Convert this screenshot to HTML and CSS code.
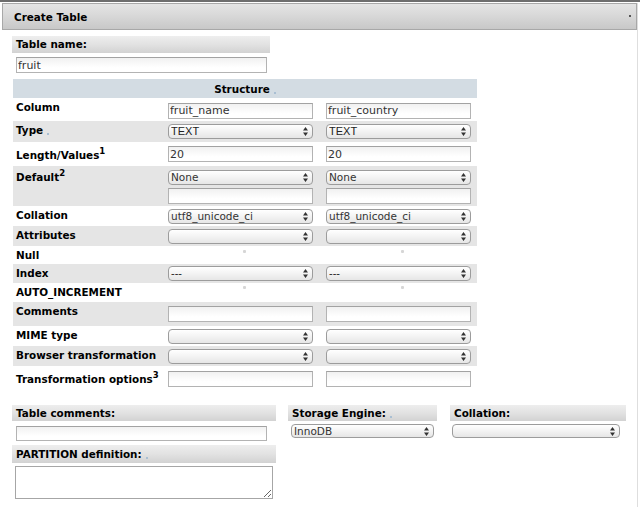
FILE: index.html
```html
<!DOCTYPE html>
<html>
<head>
<meta charset="utf-8">
<title>Create Table</title>
<link rel="stylesheet" href="styles.css">
</head>
<body>
<div class="topline"></div>
<div class="page">
  <div class="titlebar">Create Table<span class="corner-dot"></span></div>
  <div class="content">
    <div class="legend legend-name">Table name:</div>
    <input class="txt txt-name" type="text" value="fruit">

    <table class="structure">
      <colgroup><col class="c-label"><col class="c-one"><col class="c-two"></colgroup>
      <tr class="r-head"><th colspan="3">Structure<span class="help"></span></th></tr>
      <tr class="r-column">
        <td class="lbl">Column</td>
        <td><input class="txt txt-col" type="text" value="fruit_name"></td>
        <td><input class="txt txt-col" type="text" value="fruit_country"></td>
      </tr>
      <tr class="r-type odd">
        <td class="lbl">Type<span class="help"></span></td>
        <td><span class="sel"><select class="s-col"><option>TEXT</option></select><svg class="arr" viewBox="0 0 5 9"><path d="M2.5 0L5 3.6H0Z M2.5 9L0 5.4H5Z"/></svg></span></td>
        <td><span class="sel"><select class="s-col"><option>TEXT</option></select><svg class="arr" viewBox="0 0 5 9"><path d="M2.5 0L5 3.6H0Z M2.5 9L0 5.4H5Z"/></svg></span></td>
      </tr>
      <tr class="r-length">
        <td class="lbl lbl-sup">Length/Values<sup>1</sup></td>
        <td><input class="txt txt-col" type="text" value="20"></td>
        <td><input class="txt txt-col" type="text" value="20"></td>
      </tr>
      <tr class="r-default odd">
        <td class="lbl lbl-default">Default<sup>2</sup></td>
        <td class="stack"><span class="sel"><select class="s-col s-lucida"><option>None</option></select><svg class="arr" viewBox="0 0 5 9"><path d="M2.5 0L5 3.6H0Z M2.5 9L0 5.4H5Z"/></svg></span><input class="txt txt-col txt-under" type="text" value=""></td>
        <td class="stack"><span class="sel"><select class="s-col s-lucida"><option>None</option></select><svg class="arr" viewBox="0 0 5 9"><path d="M2.5 0L5 3.6H0Z M2.5 9L0 5.4H5Z"/></svg></span><input class="txt txt-col txt-under" type="text" value=""></td>
      </tr>
      <tr class="r-collation">
        <td class="lbl">Collation</td>
        <td><span class="sel"><select class="s-col s-lucida"><option>utf8_unicode_ci</option></select><svg class="arr" viewBox="0 0 5 9"><path d="M2.5 0L5 3.6H0Z M2.5 9L0 5.4H5Z"/></svg></span></td>
        <td><span class="sel"><select class="s-col s-lucida"><option>utf8_unicode_ci</option></select><svg class="arr" viewBox="0 0 5 9"><path d="M2.5 0L5 3.6H0Z M2.5 9L0 5.4H5Z"/></svg></span></td>
      </tr>
      <tr class="r-attr odd">
        <td class="lbl">Attributes</td>
        <td><span class="sel"><select class="s-col"><option></option></select><svg class="arr" viewBox="0 0 5 9"><path d="M2.5 0L5 3.6H0Z M2.5 9L0 5.4H5Z"/></svg></span></td>
        <td><span class="sel"><select class="s-col"><option></option></select><svg class="arr" viewBox="0 0 5 9"><path d="M2.5 0L5 3.6H0Z M2.5 9L0 5.4H5Z"/></svg></span></td>
      </tr>
      <tr class="r-null">
        <td class="lbl">Null</td>
        <td class="dotcell"><span class="chk"></span></td>
        <td class="dotcell"><span class="chk"></span></td>
      </tr>
      <tr class="r-index odd">
        <td class="lbl">Index</td>
        <td><span class="sel"><select class="s-col"><option>---</option></select><svg class="arr" viewBox="0 0 5 9"><path d="M2.5 0L5 3.6H0Z M2.5 9L0 5.4H5Z"/></svg></span></td>
        <td><span class="sel"><select class="s-col"><option>---</option></select><svg class="arr" viewBox="0 0 5 9"><path d="M2.5 0L5 3.6H0Z M2.5 9L0 5.4H5Z"/></svg></span></td>
      </tr>
      <tr class="r-auto">
        <td class="lbl">AUTO_INCREMENT</td>
        <td class="dotcell"><span class="chk"></span></td>
        <td class="dotcell"><span class="chk"></span></td>
      </tr>
      <tr class="r-comments odd">
        <td class="lbl">Comments</td>
        <td><input class="txt txt-col" type="text" value=""></td>
        <td><input class="txt txt-col" type="text" value=""></td>
      </tr>
      <tr class="r-mime">
        <td class="lbl">MIME type</td>
        <td><span class="sel"><select class="s-col"><option></option></select><svg class="arr" viewBox="0 0 5 9"><path d="M2.5 0L5 3.6H0Z M2.5 9L0 5.4H5Z"/></svg></span></td>
        <td><span class="sel"><select class="s-col"><option></option></select><svg class="arr" viewBox="0 0 5 9"><path d="M2.5 0L5 3.6H0Z M2.5 9L0 5.4H5Z"/></svg></span></td>
      </tr>
      <tr class="r-browser odd">
        <td class="lbl">Browser transformation</td>
        <td><span class="sel"><select class="s-col"><option></option></select><svg class="arr" viewBox="0 0 5 9"><path d="M2.5 0L5 3.6H0Z M2.5 9L0 5.4H5Z"/></svg></span></td>
        <td><span class="sel"><select class="s-col"><option></option></select><svg class="arr" viewBox="0 0 5 9"><path d="M2.5 0L5 3.6H0Z M2.5 9L0 5.4H5Z"/></svg></span></td>
      </tr>
      <tr class="r-transform">
        <td class="lbl lbl-sup">Transformation options<sup>3</sup></td>
        <td><input class="txt txt-col" type="text" value=""></td>
        <td><input class="txt txt-col" type="text" value=""></td>
      </tr>
    </table>

    <div class="bottom">
      <div class="bcol bcol-left">
        <div class="legend">Table comments:</div>
        <input class="txt txt-comment" type="text" value="">
        <div class="legend legend-part">PARTITION definition:<span class="help"></span></div>
        <textarea class="part"></textarea>
      </div>
      <div class="bcol bcol-mid">
        <div class="legend">Storage Engine:<span class="help"></span></div>
        <span class="sel sel-engine"><select class="s-engine s-lucida"><option>InnoDB</option></select><svg class="arr" viewBox="0 0 5 9"><path d="M2.5 0L5 3.6H0Z M2.5 9L0 5.4H5Z"/></svg></span>
      </div>
      <div class="bcol bcol-right">
        <div class="legend">Collation:</div>
        <span class="sel sel-coll"><select class="s-coll"><option></option></select><svg class="arr" viewBox="0 0 5 9"><path d="M2.5 0L5 3.6H0Z M2.5 9L0 5.4H5Z"/></svg></span>
      </div>
    </div>
  </div>
</div>
</body>
</html>
```
FILE: styles.css
```css
html, body {
  margin: 0;
  padding: 0;
  background: #ffffff;
}
body {
  width: 640px;
  height: 507px;
  overflow: hidden;
  font-family: "DejaVu Sans", Verdana, sans-serif;
  font-size: 10.4px;
  color: #000;
}
.topline {
  height: 2px;
  background: #6e6e6e;
  margin-bottom: 1px;
}
.page {
  width: 638px;
  height: 504px;
  box-sizing: border-box;
  border-right: 1px solid #dedede;
}
.titlebar {
  position: relative;
  margin-left: 2px;
  height: 25px;
  border: 1px solid #a8a8a8;
  background: linear-gradient(#e4e4e4, #dadada 40%, #c8c8c8);
  font-weight: bold;
  line-height: 27px;
  padding-left: 11px;
  box-sizing: content-box;
}
.corner-dot {
  position: absolute;
  right: 5px;
  top: 11px;
  width: 2px;
  height: 2px;
  background: #555;
}
.content {
  padding-left: 12px;
}
.legend {
  height: 16px;
  line-height: 16px;
  font-weight: bold;
  padding-left: 4px;
  background: linear-gradient(#eeeeee, #e2e2e2 50%, #d2d2d2);
}
.legend-name {
  margin-top: 6px;
  width: 254px;
  height: 17px;
  line-height: 17px;
}
.help {
  display: inline-block;
  width: 2px;
  height: 2px;
  background: #a9bfd3;
  margin-left: 4px;
  vertical-align: -1px;
}
.txt {
  display: block;
  box-sizing: border-box;
  height: 16px;
  border: 1px solid #b3b3b3;
  border-top-color: #a2a2a2;
  background: linear-gradient(#f1f1f1, #ffffff 70%);
  font-family: "DejaVu Sans", Verdana, sans-serif;
  font-size: 11px;
  color: #333;
  padding: 0 1px;
  margin: 0;
  outline: none;
}
.txt-name {
  width: 251px;
  margin: 4px 0 0 4px;
}
.structure {
  border-collapse: collapse;
  margin: 6px 0 0 1px;
  width: 464px;
  table-layout: fixed;
}
.c-label { width: 155px; }
.c-one { width: 158px; }
.c-two { width: 151px; }
.structure td, .structure th {
  padding: 0;
  box-sizing: border-box;
  vertical-align: middle;
  line-height: 12px;
}
.structure th {
  background: #d3dce3;
  height: 19px;
  font-weight: bold;
  text-align: center;
}
.structure tr.odd td {
  background: #e5e5e5;
}
.structure td.lbl {
  font-weight: bold;
  padding-left: 3px;
  vertical-align: top;
  padding-top: 3px;
  line-height: 13px;
  white-space: nowrap;
}
.lbl sup {
  font-size: 8.5px;
  line-height: 0;
  vertical-align: 5px;
}
.structure td.lbl-sup {
  padding-top: 7px;
}
.structure td.lbl-default {
  padding-top: 5px;
}
.r-column td { height: 23px; }
.r-type td { height: 21px; }
.r-length td { height: 24px; }
.r-default td { height: 40px; }
.r-collation td { height: 20px; }
.r-attr td { height: 20px; }
.r-null td { height: 18px; }
.r-index td { height: 19px; }
.r-auto td { height: 19px; }
.r-comments td { height: 24px; }
.r-mime td { height: 20px; }
.r-browser td { height: 20px; }
.r-transform td { height: 26px; }
.r-column td:not(.lbl) { padding-top: 2px; }
.txt-col {
  width: 145px;
}
.structure td.stack {
  vertical-align: top;
  padding-top: 4px;
}
.stack .sel { display: block; width: 145px; }
.txt-under {
  margin-top: 3px;
}
.sel {
  position: relative;
  display: inline-block;
  vertical-align: middle;
  line-height: 0;
}
.sel select {
  -webkit-appearance: none;
  appearance: none;
  box-sizing: border-box;
  height: 15px;
  border: 1px solid #9c9c9c;
  border-radius: 4px;
  background: linear-gradient(#ffffff, #f3f3f3 50%, #e6e6e6);
  font-family: "Liberation Sans", Arial, sans-serif;
  font-size: 11px;
  line-height: 13px;
  color: #222;
  padding: 0 0 0 2px;
  margin: 0;
  outline: none;
  vertical-align: top;
}
.sel select.s-lucida {
  font-family: "DejaVu Sans", Verdana, sans-serif;
  font-size: 10.5px;
  color: #333;
}
.sel .arr {
  position: absolute;
  right: 5px;
  top: 3px;
  width: 5px;
  height: 9px;
  fill: #333;
  pointer-events: none;
}
.s-col { width: 145px; }
.chk {
  display: block;
  width: 3px;
  height: 3px;
  background: #d6d6d6;
  margin-left: 75px;
  border-radius: 1px;
}
.r-null .chk { margin-top: -5px; }
.r-auto .chk { margin-top: -7px; }
.bottom {
  display: flex;
  margin-top: 13px;
}
.bcol-left { width: 264px; }
.bcol-mid { width: 149px; margin-left: 12px; }
.bcol-right { width: 176px; margin-left: 13px; }
.txt-comment {
  width: 251px;
  height: 15px;
  margin: 5px 0 0 4px;
}
.legend-part {
  margin-top: 4px;
  height: 18px;
  line-height: 18px;
}
.part {
  display: block;
  box-sizing: border-box;
  width: 258px;
  height: 33px;
  margin: 3px 0 0 3px;
  border: 1px solid #a6a6a6;
  background: #fff;
  font-family: "DejaVu Sans", sans-serif;
  font-size: 11px;
  padding: 1px;
  outline: none;
}
.sel-engine {
  margin: 3px 0 0 3px;
  display: block;
  width: 143px;
}
.s-engine { width: 143px; height: 14px !important; }
.sel-coll {
  margin: 3px 0 0 2px;
  display: block;
  width: 168px;
}
.s-coll { width: 168px; height: 14px !important; }
.sel-engine .arr, .sel-coll .arr { top: 2.5px; }
```
